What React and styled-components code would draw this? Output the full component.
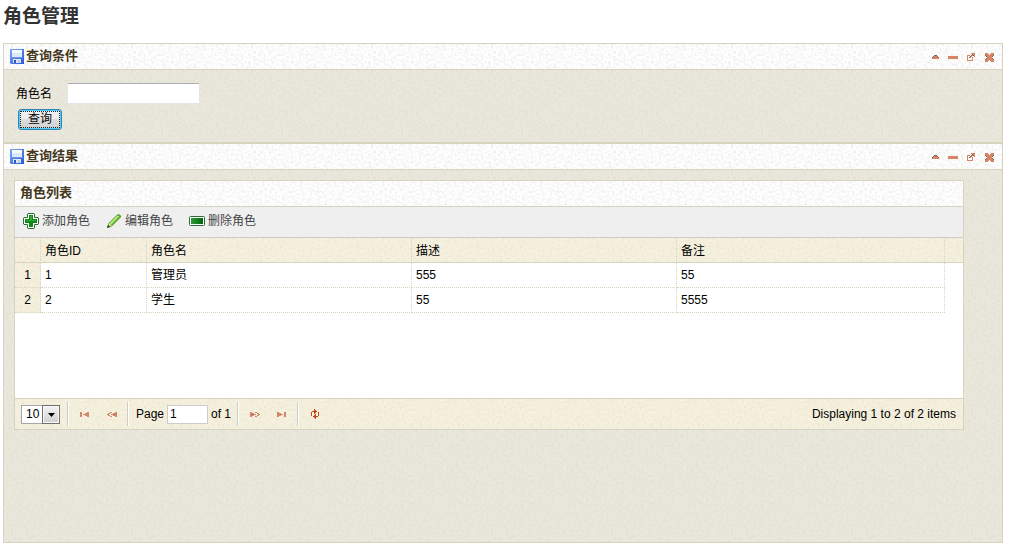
import React, { useState } from "react";
import styled, { createGlobalStyle, css } from "styled-components";

// paper grain, tiled behind panels and headers
const grain = (r, g, b, strength) => {
    const svg = `<svg xmlns="http://www.w3.org/2000/svg" width="120" height="120"><filter id="n" x="0" y="0" width="100%" height="100%" color-interpolation-filters="sRGB"><feTurbulence type="fractalNoise" baseFrequency="0.4" numOctaves="2" seed="4" stitchTiles="stitch"/><feColorMatrix values="0 0 0 0 ${r} 0 0 0 0 ${g} 0 0 0 0 ${b} ${strength} 0 0 0 -${strength * 0.4}"/></filter><rect width="120" height="120" filter="url(#n)"/></svg>`;
    return `url("data:image/svg+xml,${encodeURIComponent(svg)}")`;
};

const whitePaper = css`background: #ffffff ${grain(0.92, 0.92, 0.92, 2)};`;
const stonePaper = css`background: #eae8dd ${grain(0.87, 0.86, 0.8, 1.5)};`;
const creamPaper = css`background: #f6f1df ${grain(0.92, 0.9, 0.81, 2)};`;

const roles = [
    { id: 1, name: "管理员", description: "555", remark: "55" },
    { id: 2, name: "学生", description: "55", remark: "5555" },
];

const palette = { o: "#d88465", k: "#7d625a", l: "#c98e75", r: "#c4481c" };

const sprites = {
    collapse: ["..kkk..", ".koook.", "koooook", "ooooooo"],
    minimize: ["oooooooooo", "oooooooooo", "oooooooooo"],
    maximize: ["....oooo", ".....koo", "ooo.koko", "o..ko..o", "o.ko.o..", "o....o..", "o....o..", "oooooo.."],
    close: ["ooo...ooo", "oooo.oooo", "kooooooo" + "k", ".koooook.", "..ooooo..", ".koooook.", "koooooook", "oooo.oooo", "ooo...ooo"],
    first: ["oo.....lo", "ol...looo", "ol.looooo", "ol...looo", "oo.....lo"],
    prev: ["...lo...lo", ".lo...looo", "lo..lookoo", ".lo...looo", "...lo...lo"],
    refresh: ["....r.....", "....rr....", "..rrrrr...", ".r..rr..r.", ".r..r...r.", ".r...r..r.", ".r..rr..r.", "...rrrrr..", "....rr....", ".....r...."],
};

const Sprite = ({ name, flip }) => {
    const rows = sprites[name];
    const width = rows[0].length;
    return (
        <svg width={width} height={rows.length} shapeRendering="crispEdges" aria-hidden="true">
            <g transform={flip ? `translate(${width} 0) scale(-1 1)` : undefined}>
                {rows.map((row, y) =>
                    [...row].map((key, x) =>
                        key === "." ? null : <rect key={`${x}-${y}`} x={x} y={y} width="1" height="1" fill={palette[key]} />
                    )
                )}
            </g>
        </svg>
    );
};

const SaveIcon = () => (
    <svg width="16" height="16" viewBox="0 0 16 16" aria-hidden="true">
        <defs>
            <linearGradient id="disk" x1="0" y1="0" x2="1" y2="1">
                <stop offset="0" stopColor="#7eaaf4" />
                <stop offset="1" stopColor="#2458d8" />
            </linearGradient>
        </defs>
        <path d="M0 0h14v15H1l-1-1z" fill="url(#disk)" />
        <path d="M2 1h10v7H2z" fill="#d9eafc" />
        <path d="M2 1h10v3H2z" fill="#f6fbff" />
        <path d="M1 8h12v1H1z" fill="#6b96ec" />
        <path d="M3 10h8v4H3z" fill="#e3e6f2" />
        <path d="M4 11h2v3H4z" fill="#2c56bd" />
        <path d="M8 11h2v3H8z" fill="#c4c8dc" />
    </svg>
);

const AddIcon = () => (
    <svg width="16" height="16" viewBox="0 0 16 16" aria-hidden="true">
        <path d="M5 .5h6l.5.5v3.5H15l.5.5v6l-.5.5h-3.5V15l-.5.5H5l-.5-.5v-3.5H1l-.5-.5V5l.5-.5h3.5V1z" fill="#fff" stroke="#2c6b35" />
        <path d="M6 2h4v4h4v4h-4v4H6v-4H2V6h4z" fill="#0d8a16" />
        <path d="M7 3h2v4h4v1H3V7h4z" fill="#38a63a" />
    </svg>
);

const EditIcon = () => (
    <svg width="16" height="16" viewBox="0 0 16 16" aria-hidden="true">
        <path d="M1.5 14.5L3 10.5 11.5 2l1.500-.5 1.500 1.500-.5 1.500L5.500 13z" fill="#76c832" stroke="#2c8412" />
        <path d="M4 11L12 3" stroke="#cdf28c" strokeWidth="1.5" />
        <path d="M1 15l1-3 2 2z" fill="#36502a" />
        <path d="M2.5 11.5l2 2 1-1-2-2z" fill="#f1e6b4" />
    </svg>
);

const RemoveIcon = () => (
    <svg width="16" height="16" viewBox="0 0 16 16" aria-hidden="true">
        <defs>
            <linearGradient id="bar">
                <stop offset="0" stopColor="#2f9c34" />
                <stop offset="1" stopColor="#04640c" />
            </linearGradient>
        </defs>
        <rect x=".5" y="3.5" width="15" height="9" rx="1" fill="#fff" stroke="#2c6b35" />
        <rect x="2" y="5" width="12" height="6" fill="url(#bar)" />
    </svg>
);

const PanelTools = () => (
    <Tools>
        <ToolButton type="button" aria-label="Collapse"><Sprite name="collapse" /></ToolButton>
        <ToolButton type="button" aria-label="Minimize"><Sprite name="minimize" /></ToolButton>
        <ToolButton type="button" aria-label="Maximize"><Sprite name="maximize" /></ToolButton>
        <ToolButton type="button" aria-label="Close"><Sprite name="close" /></ToolButton>
    </Tools>
);

const Pager = () => {
    const [page, setPage] = useState("1");
    return (
        <PagerBar>
            <SelectBox>
                <select aria-label="Page size" defaultValue="10">
                    <option>10</option>
                    <option>20</option>
                    <option>50</option>
                </select>
                <span className="arrow">
                    <svg width="7" height="4" aria-hidden="true"><path d="M0 0h7L3.5 4z" fill="#000" /></svg>
                </span>
            </SelectBox>
            <Separator />
            <PagerButton type="button" aria-label="First page"><Sprite name="first" /></PagerButton>
            <PagerButton type="button" aria-label="Previous page"><Sprite name="prev" /></PagerButton>
            <Separator />
            <PageField>
                <label htmlFor="page">Page</label>
                <input id="page" value={page} onChange={(e) => setPage(e.target.value)} />
                <span>of 1</span>
            </PageField>
            <Separator />
            <PagerButton type="button" aria-label="Next page"><Sprite name="prev" flip /></PagerButton>
            <PagerButton type="button" aria-label="Last page"><Sprite name="first" flip /></PagerButton>
            <Separator />
            <PagerButton type="button" aria-label="Refresh"><Sprite name="refresh" /></PagerButton>
            <PagerInfo>Displaying 1 to 2 of 2 items</PagerInfo>
        </PagerBar>
    );
};

const App = () => {
    const [name, setName] = useState("");
    return (
        <Page>
            <GlobalStyle />
            <PageTitle>角色管理</PageTitle>
            <Panel>
                <PanelHeader>
                    <SaveIcon />
                    <h2>查询条件</h2>
                    <PanelTools />
                </PanelHeader>
                <SearchForm onSubmit={(e) => e.preventDefault()}>
                    <Field>
                        <label htmlFor="roleName">角色名</label>
                        <input id="roleName" value={name} onChange={(e) => setName(e.target.value)} />
                    </Field>
                    <SearchButton type="submit"><span>查询</span></SearchButton>
                </SearchForm>
            </Panel>
            <Panel>
                <PanelHeader>
                    <SaveIcon />
                    <h2>查询结果</h2>
                    <PanelTools />
                </PanelHeader>
                <ResultBody>
                    <Grid>
                        <PanelHeader>
                            <h2>角色列表</h2>
                        </PanelHeader>
                        <Toolbar>
                            <ActionButton type="button"><AddIcon />添加角色</ActionButton>
                            <ActionButton type="button"><EditIcon />编辑角色</ActionButton>
                            <ActionButton type="button"><RemoveIcon />删除角色</ActionButton>
                        </Toolbar>
                        <GridView>
                            <Table>
                                <colgroup>
                                    <col width="26" />
                                    <col width="106" />
                                    <col width="265" />
                                    <col width="265" />
                                    <col />
                                    <col width="18" />
                                </colgroup>
                                <thead>
                                    <tr>
                                        <th></th>
                                        <th>角色ID</th>
                                        <th>角色名</th>
                                        <th>描述</th>
                                        <th>备注</th>
                                        <th></th>
                                    </tr>
                                </thead>
                                <tbody>
                                    {roles.map((role, index) => (
                                        <tr key={role.id}>
                                            <th scope="row">{index + 1}</th>
                                            <td>{role.id}</td>
                                            <td>{role.name}</td>
                                            <td>{role.description}</td>
                                            <td>{role.remark}</td>
                                        </tr>
                                    ))}
                                </tbody>
                            </Table>
                        </GridView>
                        <Pager />
                    </Grid>
                </ResultBody>
            </Panel>
        </Page>
    );
};

const GlobalStyle = createGlobalStyle`
    * {
        box-sizing: border-box;
    }

    body {
        margin: 0;
        background: #fff;
        color: #000;
        font-family: "Liberation Sans", "Noto Sans CJK SC", sans-serif;
        font-size: 12px;
        line-height: 16px;
    }

    button, input, select {
        font: inherit;
        color: inherit;
    }

    svg {
        display: block;
        flex: none;
    }
`;

const Page = styled.main`
    padding: 5px 11px 11px 3px;
`;

const PageTitle = styled.h1`
    margin: 0 0 14px;
    color: #333;
    font-size: 19px;
    line-height: 24px;
`;

const Panel = styled.section`
    border: 1px solid #d6d3bf;
`;

const PanelHeader = styled.header`
    ${whitePaper}
    display: flex;
    align-items: center;
    height: 26px;
    padding: 0 5px;
    border-bottom: 1px solid #d6d3bf;

    h2 {
        margin: 0;
        padding-bottom: 2px;
        color: #45381c;
        font-size: 13px;
        line-height: 20px;
    }

    > svg {
        margin-left: 1px;
    }
`;

const Tools = styled.div`
    display: flex;
    gap: 2px;
    margin-left: auto;
    padding-top: 1px;
`;

const ToolButton = styled.button`
    display: flex;
    align-items: center;
    justify-content: center;
    width: 16px;
    height: 16px;
    padding: 0;
    border: 0;
    background: none;
`;

const SearchForm = styled.form`
    ${stonePaper}
    padding: 13px 12px 12px;
`;

const Field = styled.div`
    display: flex;
    align-items: center;
    margin-bottom: 5px;

    label {
        width: 51px;
    }

    input {
        width: 133px;
        height: 21px;
        padding: 0 4px;
        border: 1px solid #e3e5ec;
        border-top-color: #abadb3;
        border-radius: 2px;
        background: #fff;
    }
`;

const SearchButton = styled.button`
    display: block;
    width: 44px;
    height: 21px;
    margin-left: 2px;
    padding: 1px;
    border: 1px solid #3c7fb1;
    border-radius: 3px;
    background: linear-gradient(#f2f2f2 0%, #ebebeb 50%, #dddddd 50%, #cfcfcf 100%);
    box-shadow: inset 0 0 0 1px #48d0f8;

    span {
        display: block;
        height: 17px;
        border: 1px dotted #222;
        line-height: 14px;
    }
`;

const ResultBody = styled.div`
    ${stonePaper}
    min-height: 372px;
    padding: 10px 38px 10px 10px;
`;

const Grid = styled.div`
    border: 1px solid #d6d3bf;
    background: #fff;
`;

const Toolbar = styled.div`
    display: flex;
    align-items: center;
    gap: 16px;
    height: 31px;
    padding: 0 8px 2px;
    border-bottom: 1px solid #ccc;
    background: #efefef;
`;

const ActionButton = styled.button`
    display: flex;
    align-items: center;
    gap: 3px;
    padding: 0;
    border: 0;
    background: none;
    color: #444;
`;

const GridView = styled.div`
    min-height: 160px;
`;

const Table = styled.table`
    width: 100%;
    table-layout: fixed;
    border-collapse: separate;
    border-spacing: 0;

    th, td {
        height: 25px;
        padding: 0 4px;
        border-right: 1px dotted #d6d3bf;
        border-bottom: 1px dotted #d6d3bf;
        font-weight: normal;
        line-height: 16px;
        text-align: left;
    }

    thead {
        ${creamPaper}
    }

    thead th {
        padding-top: 2px;
        border-bottom-style: solid;
    }

    thead th:last-child {
        border-right: 0;
    }

    tbody th {
        ${creamPaper}
        padding: 0;
        text-align: center;
    }
`;

const PagerBar = styled.div`
    ${creamPaper}
    display: flex;
    align-items: center;
    height: 31px;
    padding: 0 7px 0 6px;
    border-top: 1px solid #d6d3bf;
`;

const SelectBox = styled.div`
    position: relative;
    width: 39px;
    height: 19px;
    margin-right: 5px;

    select {
        display: block;
        width: 100%;
        height: 100%;
        padding: 0 0 0 4px;
        border: 1px solid #a5a7ad;
        border-radius: 0;
        background: #fff;
        appearance: none;
    }

    .arrow {
        position: absolute;
        top: 0;
        right: 0;
        display: flex;
        align-items: center;
        justify-content: center;
        width: 18px;
        height: 19px;
        padding-top: 2px;
        border: 1px solid #707070;
        background: linear-gradient(#f4f4f4, #cfcfcf);
        box-shadow: inset 0 0 0 1px #f8f8f8;
        pointer-events: none;
    }
`;

const Separator = styled.span`
    width: 2px;
    height: 24px;
    margin: 0 2px;
    border-left: 1px solid #ccc;
    border-right: 1px solid #fff;
`;

const PagerButton = styled.button`
    display: flex;
    align-items: center;
    justify-content: center;
    width: 27px;
    height: 24px;
    padding: 0;
    border: 0;
    background: none;
`;

const PageField = styled.div`
    display: flex;
    align-items: center;
    gap: 3px;
    padding: 0 4px 0 5px;

    input {
        width: 41px;
        height: 19px;
        padding: 0 2px;
        border: 1px solid #ccc;
        background: #fff;
    }
`;

const PagerInfo = styled.span`
    margin-left: auto;
`;

export default App;
